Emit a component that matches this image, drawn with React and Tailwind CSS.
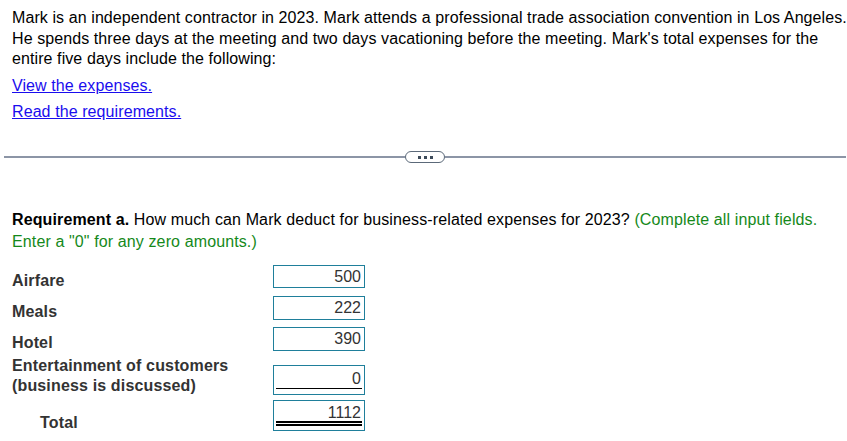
import React from 'react';

const Box = ({ children, className = '' }) => (
  <div className={`w-[92px] border border-[#1f7f9b] bg-white ${className}`}>{children}</div>
);

const App = () => {
  return (
    <div className="w-[847px] h-[441px] bg-white font-['Liberation_Sans',Arial,sans-serif] text-[16px] text-black overflow-hidden">
      {/* Question text */}
      <div className="pl-[12px] pt-[8px] tracking-[0.09px]">
        <p className="leading-[20.5px] whitespace-nowrap">
          Mark is an independent contractor in 2023. Mark attends a professional trade association convention in Los Angeles.
          <br />
          He spends three days at the meeting and two days vacationing before the meeting. Mark's total expenses for the
          <br />
          entire five days include the following:
        </p>
        <div className="mt-[6.5px] leading-[20px]">
          <a href="#" className="text-[#1a0dee] underline">View the expenses.</a>
        </div>
        <div className="mt-[6px] leading-[20px]">
          <a href="#" className="text-[#1a0dee] underline">Read the requirements.</a>
        </div>
      </div>

      {/* Separator */}
      <div className="mt-[29px] h-[12px] flex items-center pl-[4px] pr-[1px]">
        <div className="flex-1 h-[1.5px] bg-[#8c95a6]" />
        <button className="w-[40px] h-[12px] rounded-full border-[1.5px] border-[#5b6979] bg-white flex items-center justify-center gap-[3px]">
          <span className="w-[3px] h-[3px] bg-[#3d4a5a]" />
          <span className="w-[3px] h-[3px] bg-[#3d4a5a]" />
          <span className="w-[3px] h-[3px] bg-[#3d4a5a]" />
        </button>
        <div className="flex-1 h-[1.5px] bg-[#8c95a6]" />
      </div>

      {/* Requirement */}
      <div className="pl-[12px] mt-[46px]">
        <p className="leading-[22px] whitespace-nowrap tracking-[0.12px]">
          <span className="font-bold">Requirement a.</span> How much can Mark deduct for business-related expenses for 2023?{' '}
          <span className="text-[#15891a]">(Complete all input fields.</span>
          <br />
          <span className="text-[#15891a]">Enter a "0" for any zero amounts.)</span>
        </p>

        {/* Input table */}
        <div className="mt-[12px] text-[#333333]">
          <div className="flex h-[31px]">
            <div className="w-[261px] pt-[6px] leading-[20px] font-bold tracking-[0.15px]">Airfare</div>
            <Box className="h-[23px]">
              <div className="text-right pr-[3px] leading-[21px]">500</div>
            </Box>
          </div>
          <div className="flex h-[31px]">
            <div className="w-[261px] pt-[6px] leading-[20px] font-bold tracking-[0.15px]">Meals</div>
            <Box className="h-[24px]">
              <div className="text-right pr-[3px] leading-[22px]">222</div>
            </Box>
          </div>
          <div className="flex h-[29px]">
            <div className="w-[261px] pt-[6px] leading-[20px] font-bold tracking-[0.15px]">Hotel</div>
            <Box className="h-[24px]">
              <div className="text-right pr-[3px] leading-[22px]">390</div>
            </Box>
          </div>
          <div className="flex h-[44px]">
            <div className="w-[261px] leading-[20px] font-bold tracking-[0.15px]">
              Entertainment of customers
              <br />
              (business is discussed)
            </div>
            <Box className="h-[30px] mt-[9px] pt-[4px] px-[2px]">
              <div className="text-right pr-[1px] leading-[18px] border-b border-black">0</div>
            </Box>
          </div>
          <div className="flex h-[31px]">
            <div className="w-[261px] pl-[28px] pt-[13px] leading-[20px] font-bold tracking-[0.15px]">Total</div>
            <Box className="h-[31px] pt-[4px] px-[2px]">
              <div className="text-right pr-[1px] leading-[16px] border-b-[5px] border-double border-black">1112</div>
            </Box>
          </div>
        </div>
      </div>
    </div>
  );
};

export default App;
